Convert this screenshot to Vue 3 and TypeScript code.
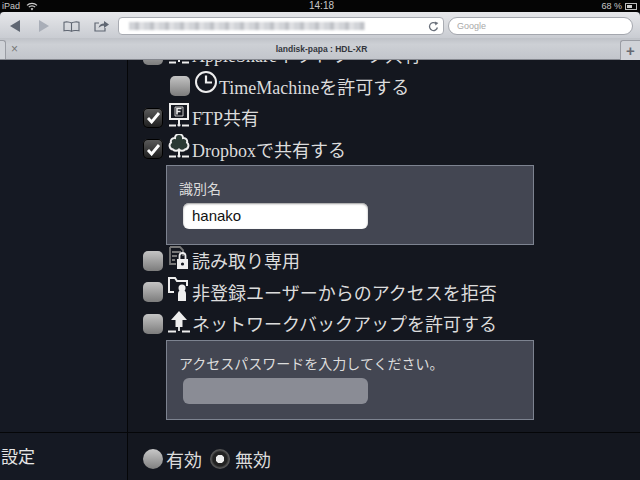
<script setup lang="ts">
interface Row { label: string; icon: string; checked: boolean; nested?: boolean }
const first: Row[] = [
  { label: 'AppleShareネットワーク共有', icon: 'share', checked: false },
  { label: 'TimeMachineを許可する', icon: 'clock', checked: false, nested: true },
  { label: 'FTP共有', icon: 'ftp', checked: true },
  { label: 'Dropboxで共有する', icon: 'tree', checked: true },
]
const second: Row[] = [
  { label: '読み取り専用', icon: 'lock', checked: false },
  { label: '非登録ユーザーからのアクセスを拒否', icon: 'user', checked: false },
  { label: 'ネットワークバックアップを許可する', icon: 'up', checked: false },
]
</script>

<template>
  <div class="ipad">
    <div class="status">
      <div class="st-left">
        <span>iPad</span>
        <svg width="12" height="9" viewBox="0 0 12 9" fill="none" stroke="#ccc" stroke-width="1.2">
          <path d="M1 3.4a7 7 0 0 1 10 0M2.8 5.2a4.4 4.4 0 0 1 6.4 0" />
          <path d="M6 8.4 4.6 6.8a2 2 0 0 1 2.8 0z" fill="#ccc" stroke="none" />
        </svg>
      </div>
      <span class="st-time">14:18</span>
      <div class="st-right">
        <span>68 %</span>
        <span class="battery"><i></i></span>
      </div>
    </div>

    <div class="toolbar">
      <svg class="t-back" width="10" height="12" viewBox="0 0 10 12"><path d="M10 0v12L0 6z" fill="#5f6672" /></svg>
      <svg class="t-fwd" width="10" height="12" viewBox="0 0 10 12"><path d="M0 0v12l10-6z" fill="#a9aeb8" /></svg>
      <svg class="t-book" width="17" height="11" viewBox="0 0 17 11" fill="none" stroke="#5f6672" stroke-width="1.1">
        <path d="M8.5 2C7 .8 3 .6 1 1.2v8.6C3 9.2 7 9.4 8.5 10.4 10 9.4 14 9.2 16 9.8V1.2C14 .6 10 .8 8.5 2zM8.5 2v8.4" />
      </svg>
      <svg class="t-share" width="16" height="12" viewBox="0 0 16 12" fill="none" stroke="#5f6672" stroke-width="1.2">
        <path d="M5 3H1v8h10V8" />
        <path d="M4.500 8C5 5 7.500 3.600 10 3.600V1l5 3.600L10 8V5.800C8 5.800 6 6.400 4.500 8z" fill="#5f6672" stroke="none" />
      </svg>
      <div class="url">
        <div class="blur-url"></div>
        <svg width="11" height="11" viewBox="0 0 11 11" fill="none" stroke="#6a707b" stroke-width="1.3">
          <path d="M9.400 6.500A4 4 0 1 1 8 2.400" />
          <path d="M6.800 0.400 10.400 2 7.400 4.600z" fill="#6a707b" stroke="none" />
        </svg>
      </div>
      <div class="search">Google</div>
    </div>

    <div class="tabs">
      <div class="tab-stub"></div>
      <div class="tab-close">×</div>
      <div class="tab-title">landisk-papa : HDL-XR</div>
      <div class="tab-add">+</div>
    </div>

    <div class="page">
      <div class="sheet">
        <div class="main-row">
          <div class="side"></div>
          <div class="cell">
            <div v-for="r in first" :key="r.label" class="opt" :class="{ nested: r.nested }">
              <span class="check" :class="{ on: r.checked }">
                <svg v-if="r.checked" width="15" height="13" viewBox="0 0 15 13" fill="none" stroke="#fff" stroke-width="2.8">
                  <path d="M2 7l3.600 4L13 2" />
                </svg>
              </span>
              <svg class="ico" width="22" height="24" viewBox="0 0 22 24" fill="none" stroke="#eee" stroke-width="2">
                <template v-if="r.icon === 'clock'">
                  <circle cx="11" cy="11" r="10" />
                  <path d="M11 4.500v7h6" stroke-width="2.200" />
                </template>
                <template v-else-if="r.icon === 'ftp'">
                  <path d="M2 1h18v15H2z" />
                  <path d="M7 4h8v9H7z" stroke-width="0.800" />
                  <path d="M9 11.500V5.500h4.500M9 8.500h3.500" stroke-width="1.600" />
                  <path d="M11 16v6M1 22.500h7M14 22.500h7" />
                  <circle cx="11" cy="22" r="1.600" fill="#eee" stroke="none" />
                </template>
                <template v-else-if="r.icon === 'tree'">
                  <path d="M7 4a4 4 0 0 1 8 0 3.500 3.500 0 0 1 4 4.500 4 4 0 0 1-2 7 4 4 0 0 1-6 0 4 4 0 0 1-6 0 4 4 0 0 1-2-7A3.500 3.500 0 0 1 7 4z" fill="#2a3a34" />
                  <path d="M11 15v7M1 22.500h7M14 22.500h7" />
                  <circle cx="11" cy="22" r="1.600" fill="#eee" stroke="none" />
                </template>
                <template v-else>
                  <path d="M3 12h16v6H3z" />
                  <path d="M1 22.500h7M14 22.500h7M11 18v4" />
                </template>
              </svg>
              <span class="txt">{{ r.label }}</span>
            </div>

            <div class="panel">
              <div class="panel-label">識別名</div>
              <div class="field">hanako</div>
            </div>

            <div v-for="r in second" :key="r.label" class="opt">
              <span class="check"></span>
              <svg class="ico" width="22" height="24" viewBox="0 0 22 24" fill="none" stroke="#eee" stroke-width="1.8">
                <template v-if="r.icon === 'lock'">
                  <path d="M2 1h10l3 3v6M2 1v17h6" stroke="#777" />
                  <path d="M4 6h9M4 10h5M4 14h3" stroke="#777" />
                  <path d="M9 13h11v10H9z" fill="#eee" stroke="none" />
                  <path d="M11.500 13v-3a3 3 0 0 1 6 0v3" />
                  <circle cx="14.500" cy="18" r="1.600" fill="#14171f" stroke="none" />
                </template>
                <template v-else-if="r.icon === 'user'">
                  <path d="M6 15H1V1h6l2 3h10v5" stroke-width="2" />
                  <circle cx="14" cy="11" r="3.500" fill="#eee" stroke="none" />
                  <path d="M10 24v-7a4 4 0 0 1 8 0v7z" fill="#eee" stroke="none" />
                </template>
                <template v-else>
                  <path d="M11 2 3 11h4.500v7h7v-7H19z" fill="#eee" stroke="none" />
                  <path d="M11 18v4M0 22.500h8M14 22.500h8" />
                </template>
              </svg>
              <span class="txt">{{ r.label }}</span>
            </div>

            <div class="panel">
              <div class="panel-label">アクセスパスワードを入力してください。</div>
              <div class="field disabled"></div>
            </div>
          </div>
        </div>

        <div class="main-row last">
          <div class="side"><span class="side-label">設定</span></div>
          <div class="cell radios">
            <span class="radio"></span><span class="txt">有効</span>
            <span class="radio on"></span><span class="txt">無効</span>
          </div>
        </div>
      </div>
    </div>
  </div>
</template>

<style>
html, body { margin: 0; background: #000; }
</style>

<style scoped>
.ipad {
  width: 640px;
  height: 480px;
  overflow: hidden;
  display: flex;
  flex-direction: column;
  font-family: "Liberation Serif", "Noto Sans CJK JP", serif;
  background: #14171f;
}
.status {
  height: 12px;
  flex: none;
  background: #050505;
  color: #c8c8c8;
  font: 9px/12px "Liberation Sans", sans-serif;
  display: flex;
  align-items: center;
  justify-content: space-between;
  padding: 0 2px 0 2px;
  position: relative;
}
.st-left, .st-right { display: flex; align-items: center; gap: 3px; }
.st-left { gap: 6px; }
.st-time { position: absolute; left: 309px; top: 0; font-size: 10px; }
.battery {
  width: 12px;
  height: 7px;
  border: 1px solid #bbb;
  display: block;
  padding: 1px;
  box-sizing: border-box;
  margin-right: 1px;
}
.battery i { display: block; width: 68%; height: 100%; background: #ccc; }
.toolbar {
  height: 26px;
  flex: none;
  padding-top: 2px;
  box-sizing: border-box;
  background: linear-gradient(#e6e7ea, #c9ccd2);
  border-radius: 4px 4px 0 0;
  display: flex;
  align-items: center;
}
.t-back { margin-left: 10px; }
.t-fwd { margin-left: 19px; }
.t-book { margin-left: 14px; }
.t-share { margin-left: 14px; }
.url {
  margin-left: 8px;
  width: 326px;
  height: 18px;
  background: #fff;
  border: 1px solid #a9acb3;
  border-radius: 4px;
  box-sizing: border-box;
  display: flex;
  align-items: center;
  justify-content: space-between;
  padding: 0 4px 0 10px;
}
.blur-url {
  width: 236px;
  height: 8px;
  background: repeating-linear-gradient(90deg, #d2d4d8 0 6px, #bfc2c7 6px 10px, #dfe0e3 10px 15px);
  filter: blur(1px);
}
.search {
  margin-left: 4px;
  width: 185px;
  height: 18px;
  background: #fff;
  border: 1px solid #a4a7ae;
  border-radius: 9px;
  box-sizing: border-box;
  font: 9px/16px "Liberation Sans", sans-serif;
  color: #a8a8a8;
  padding-left: 8px;
}
.tabs {
  height: 22px;
  flex: none;
  background: linear-gradient(#bfc2c8, #cdd0d5 30%, #c2c5cb);
  border-bottom: 1px solid #85888f;
  box-sizing: border-box;
  display: flex;
  align-items: center;
  position: relative;
  font-family: "Liberation Sans", sans-serif;
}
.tab-stub {
  width: 6px;
  height: 19px;
  margin-top: 2px;
  background: #d0d3d8;
  border-right: 1px solid #9a9da4;
  border-top: 1px solid #9a9da4;
  box-sizing: border-box;
  border-radius: 0 3px 0 0;
}
.tab-close { width: 17px; text-align: center; font-size: 12px; color: #777; }
.tab-title {
  flex: 1;
  text-align: center;
  font-size: 8.5px;
  font-weight: bold;
  color: #33363c;
}
.tab-add {
  width: 20px;
  height: 20px;
  line-height: 19px;
  text-align: center;
  font-size: 15px;
  font-weight: bold;
  color: #666a72;
  background: #d0d3d8;
  border-left: 1px solid #9a9da4;
  border-top: 1px solid #9a9da4;
  border-radius: 3px 0 0 0;
  box-sizing: border-box;
  margin-top: 2px;
}
.page { flex: 1; overflow: hidden; }
.sheet { margin-top: -21px; }
.main-row { display: flex; height: 394px; border-bottom: 1px solid #050608; box-sizing: border-box; }
.main-row.last { height: 47px; border-bottom: 0; }
.side {
  width: 128px;
  flex: none;
  box-sizing: border-box;
  background: #151923;
  border-right: 1px solid #050608;
  color: #e6e6e6;
}
.side-label {
  display: block;
  padding: 11px 0 0 1px;
  font: 17px/24px "Noto Sans CJK JP", sans-serif;
}
.cell { flex: 1; padding-left: 15px; background: #14171f; }
.opt {
  display: flex;
  align-items: center;
  height: 31.5px;
}
.opt.nested { padding-left: 27px; }
.check {
  width: 20px;
  height: 20px;
  border-radius: 5px;
  background: linear-gradient(#c4c4c4, #7c7c7c);
  flex: none;
  display: flex;
  align-items: center;
  justify-content: center;
  margin-right: 5px;
}
.check.on { background: linear-gradient(#5d5d5d, #1c1c1c); box-shadow: inset 0 0 0 1px #000; }
.ico { flex: none; margin-bottom: 6px; margin-right: 2px; }
.txt {
  font-size: 18px;
  line-height: 24px;
  color: #dcdcdc;
  padding-top: 3px;
}
.panel {
  margin-left: 23px;
  width: 368px;
  height: 80px;
  box-sizing: border-box;
  background: #434652;
  border: 1px solid #7d8390;
  padding: 12px 12px 0;
}
.panel-label {
  font: 14px/20px "Noto Sans CJK JP", sans-serif;
  color: #dcdcdc;
}
.field {
  margin: 5px 0 0 4px;
  width: 185px;
  height: 26px;
  box-sizing: border-box;
  background: #fff;
  border-radius: 6px;
  box-shadow: inset 0 1px 2px #999;
  font: 15px/26px "Liberation Sans", sans-serif;
  color: #111;
  padding-left: 9px;
}
.field.disabled { background: #8a8c95; box-shadow: none; }
.radios { display: flex; align-items: flex-start; padding-top: 16px; }
.radio {
  width: 20px;
  height: 20px;
  border-radius: 50%;
  background: linear-gradient(#c8c8c8, #808080);
  margin-right: 3px;
  flex: none;
}
.radio.on {
  background: radial-gradient(circle, #eee 0 4px, #222 4.500px 7px, #555 9px);
  margin-left: 8px;
  margin-right: 5px;
}
.radios .txt { padding-top: 0; }
</style>
